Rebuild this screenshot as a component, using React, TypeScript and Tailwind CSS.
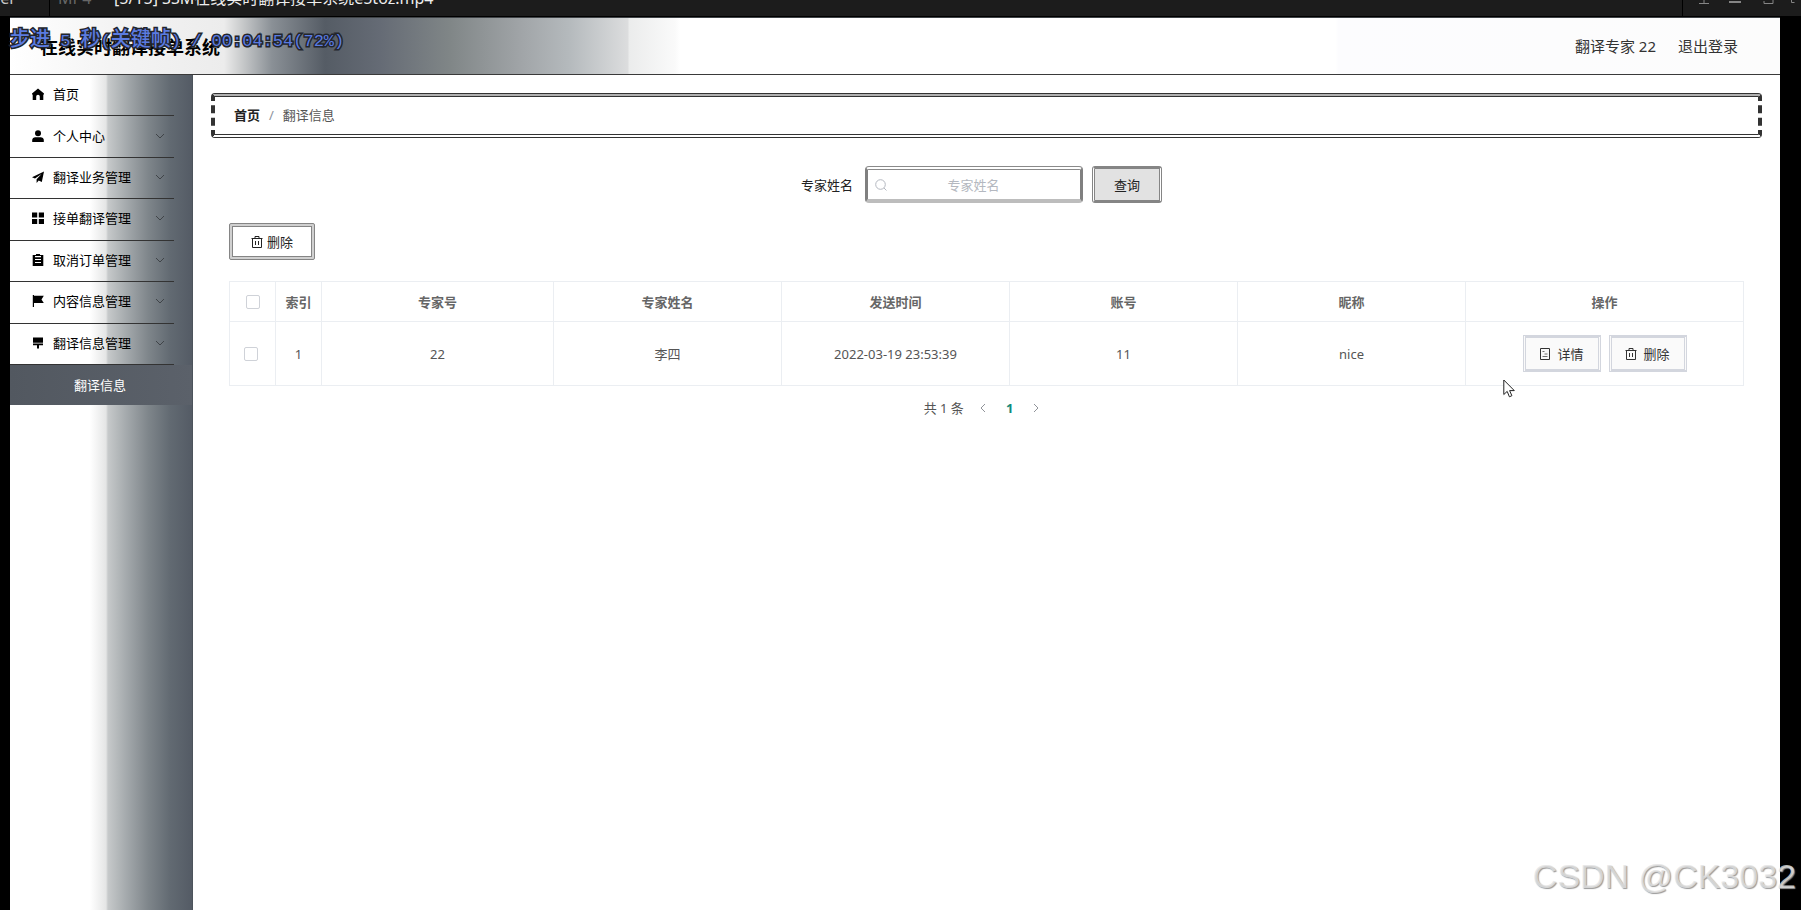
import { useState } from "react";

const menus = [
  { icon: "home", label: "首页", hasChildren: false },
  { icon: "user", label: "个人中心", hasChildren: true },
  { icon: "promotion", label: "翻译业务管理", hasChildren: true },
  { icon: "grid", label: "接单翻译管理", hasChildren: true },
  { icon: "order", label: "取消订单管理", hasChildren: true },
  { icon: "flag", label: "内容信息管理", hasChildren: true },
  { icon: "platform", label: "翻译信息管理", hasChildren: true },
];

const columns = ["专家号", "专家姓名", "发送时间", "账号", "昵称"];

const rows = [
  {
    id: 1,
    cells: ["22", "李四", "2022-03-19 23:53:39", "11", "nice"],
  },
];

const MenuIcon = ({ name }: { name: string }) => (
  <svg viewBox="0 0 12 12" className="size-3 shrink-0" fill="currentColor">
    {name === "home" && (
      <path d="M6 .4 0 5.400v1.200h.7V12h3.500V8.500a1.800 1.800 0 0 1 3.600 0V12h3.500V6.600h.7V5.400z" />
    )}
    {name === "user" && (
      <>
        <circle cx="6" cy="3.200" r="3" />
        <path d="M.2 12V9.800Q.4 7.400 3 7.200h6q2.600.2 2.800 2.600V12z" />
      </>
    )}
    {name === "promotion" && (
      <path d="M12 .5 0 6.200l3 1.300L9.500 3 4.600 8.300V12l2.100-2.500 3.100 1.600z" />
    )}
    {name === "grid" && (
      <path d="M0 .5h5.200v5H0zM6.800.5H12v5H6.800zM0 7h5.200v5H0zM6.800 7H12v5H6.800z" />
    )}
    {name === "order" && (
      <path
        fillRule="evenodd"
        d="M4 0h4v1h3.300v11H.7V1H4zM3 2v1.200h6V2zM3 5v1h6V5zm0 3v1h6V8z"
      />
    )}
    {name === "flag" && <path d="M.8 0H2v.8h9.800L9.500 4.400 11.800 8H2v4H.8z" />}
    {name === "platform" && (
      <path d="M1 .5h10v5.300H1zM1 6.600h10v1.600H7V11l-1 1-1-1V8.200H1z" />
    )}
  </svg>
);

const TrashIcon = () => (
  <svg
    viewBox="0 0 12 12"
    className="size-3"
    fill="none"
    stroke="currentColor"
    strokeWidth="1"
  >
    <path d="M.5 2.500h11M4 2.500v-2h4v2M1.500 2.500v9h9v-9M4.500 5v4M7.500 5v4" />
  </svg>
);

const DetailIcon = () => (
  <svg
    viewBox="0 0 12 12"
    className="size-3"
    fill="none"
    stroke="currentColor"
    strokeWidth="1"
  >
    <path d="M1.500.5h9v11h-9z" />
    <path d="M3.500 3.500h2M5.500 6h3M3.500 8.500h5" opacity=".7" />
  </svg>
);

const Chevron = ({ d }: { d: string }) => (
  <svg
    viewBox="0 0 10 10"
    className="size-[10px] shrink-0"
    fill="none"
    stroke="currentColor"
    strokeWidth="1"
  >
    <path d={d} />
  </svg>
);

const App = () => {
  const [keyword, setKeyword] = useState("");
  const [checked, setChecked] = useState<number[]>([]);

  const toggleRow = (id: number) => {
    setChecked((prev) =>
      prev.includes(id) ? prev.filter((c) => c !== id) : [...prev, id],
    );
  };

  const checkboxClass =
    "block size-[14px] appearance-none rounded-[2px] border border-[#cfd2d8] bg-white checked:bg-[#00897b]";

  return (
    <div className="relative flex min-h-screen flex-col overflow-hidden bg-black font-['Noto_Sans','Noto_Sans_CJK_SC',sans-serif] text-[13px] leading-5 text-[#222]">
      {/* Player title bar */}
      <div className="flex h-4 items-end overflow-hidden bg-[#1c1c1c] text-base leading-6">
        <div className="flex h-4 w-[50px] items-end border-r border-black text-[#c8c8c8]">
          <span className="mb-[6px] -ml-1">ler</span>
        </div>
        <span className="mb-[6px] ml-2 w-14 text-[#666]">MP4</span>
        <span className="mb-[6px] flex-1 whitespace-nowrap text-[#eee]">
          [5/15] SSM在线实时翻译接单系统e5toz.mp4
        </span>
        <div className="h-4 w-[119px] border-l border-black text-[#858585]">
          <svg
            viewBox="0 0 118 16"
            className="h-4 w-[118px]"
            fill="none"
            stroke="currentColor"
          >
            <path d="M16 3.500h10M21 0v3" />
            <path d="M46 2h12" strokeWidth="2" />
            <path d="M81 3.500h9V0M81 1v2.500M108.500 0v2.500h3" />
          </svg>
        </div>
      </div>

      <div className="mt-px mr-[21px] ml-[10px] flex flex-1 flex-col border-t border-[#3f4347] bg-white">
        {/* Header */}
        <header className="flex h-[57px] items-center justify-between border-b border-[#3a3a3a] bg-[linear-gradient(90deg,#fff_0,#f4f4f4_100px,#ececec_214px,#c8cacb_232px,#8a9096_262px,#555c65_315px,#656b75_370px,#808687_440px,#a0a4a7_510px,#b5babd_560px,#dcddde_618px,#ebecec_619px,#fafafa_665px,#fff_670px,#fff_1326px,#fcfcfe_1328px,#fcfcfc_100%)] pr-[42px] pl-[30px]">
          <h1 className="pt-[2px] text-[18px] font-bold text-black">
            在线实时翻译接单系统
          </h1>
          <div className="flex gap-[22px] text-[15px] text-[#333]">
            <span>翻译专家 22</span>
            <a href="#logout">退出登录</a>
          </div>
        </header>

        <div className="flex flex-1">
          {/* Sidebar */}
          <aside className="w-[183px] shrink-0 border-r border-[#4c535b] bg-[linear-gradient(90deg,#fff_80px,#e4e5e5_96px,#c6c9ca_98px,#a5aaad_116px,#7f868b_138px,#626a72_160px,#545b65_182px)] text-black">
            <nav className="grid h-[290px] grid-rows-7">
              {menus.map((menu) => (
                <a
                  key={menu.label}
                  href="#menu"
                  className="mr-[18px] flex items-center border-b border-[#333] pr-[9px] pb-[2px] pl-[22px]"
                >
                  <MenuIcon name={menu.icon} />
                  <span className="ml-[9px] flex-1">{menu.label}</span>
                  {menu.hasChildren && (
                    <span className="text-[#404448]">
                      <Chevron d="M1 3l4 4 4-4" />
                    </span>
                  )}
                </a>
              ))}
            </nav>
            <a
              href="#info"
              className="block bg-[linear-gradient(90deg,#525860,#5b616a)] py-[10px] pr-[2px] text-center text-white"
            >
              翻译信息
            </a>
          </aside>

          {/* Content */}
          <main className="min-w-0 flex-1 px-[18px] pt-[18px]">
            <nav className="flex h-[45px] items-center gap-[9px] rounded-[4px] border-4 border-[#333] bg-[linear-gradient(#b0b0b0_0,#b0b0b0_4px,#fff_4px)] bg-origin-border px-[19px] pb-[2px] [border-style:double_dashed]">
              <a href="#home" className="font-bold text-[#222]">
                首页
              </a>
              <span className="text-[#8c929c]">/</span>
              <span className="text-[#555]">翻译信息</span>
            </nav>

            <div className="px-[18px] pt-7">
              <form
                className="flex items-center justify-center pr-[10px]"
                onSubmit={(e) => e.preventDefault()}
              >
                <label htmlFor="expert">专家姓名</label>
                <div className="ml-3 flex h-[37px] w-[218px] items-center rounded-[4px] border-4 border-x-[3px] border-t-[#8a8a8a] border-r-[#808080] border-b-[#bdbdbd] border-l-[#808080] pl-[7px] text-[#b4b8c0] [border-style:double_solid_solid]">
                  <svg
                    viewBox="0 0 12 12"
                    className="size-3"
                    fill="none"
                    stroke="currentColor"
                  >
                    <circle cx="5.500" cy="5.500" r="4.800" />
                    <path d="M9 9l2.500 2.500" />
                  </svg>
                  <input
                    id="expert"
                    type="text"
                    className="min-w-0 flex-1 pr-5 text-center text-[#333] outline-none placeholder:text-[#b4b8c0]"
                    placeholder="专家姓名"
                    value={keyword}
                    onChange={(e) => setKeyword(e.target.value)}
                  />
                </div>
                <button
                  type="submit"
                  className="ml-[9px] h-[37px] w-[70px] rounded-[3px] border-[3px] border-[#858585] bg-[#e2e2e2] bg-clip-padding [border-style:solid_double]"
                >
                  查询
                </button>
              </form>

              <button
                type="button"
                className="mt-5 flex h-[37px] w-[86px] items-center justify-center gap-1 rounded-[2px] border-4 border-double border-[#858585] bg-[linear-gradient(#fff,#fff),linear-gradient(#d0d0d0,#d0d0d0)] [background-clip:padding-box,border-box]"
              >
                <TrashIcon />
                删除
              </button>

              <table className="mt-[21px] w-full table-fixed border-collapse text-center text-[#555]">
                <colgroup>
                  <col className="w-[46px]" />
                  <col className="w-[46px]" />
                  <col className="w-[232px]" />
                  <col />
                  <col />
                  <col />
                  <col />
                  <col className="w-[278px]" />
                </colgroup>
                <thead className="text-[#666]">
                  <tr className="h-10">
                    <th className="border border-[#ebeef2]">
                      <input
                        type="checkbox"
                        aria-label="全选"
                        className={`${checkboxClass} mx-auto`}
                        checked={checked.length === rows.length}
                        onChange={(e) =>
                          setChecked(
                            e.target.checked ? rows.map((r) => r.id) : [],
                          )
                        }
                      />
                    </th>
                    <th className="border border-[#ebeef2]">索引</th>
                    {columns.map((col) => (
                      <th key={col} className="border border-[#ebeef2]">
                        {col}
                      </th>
                    ))}
                    <th className="border border-[#ebeef2]">操作</th>
                  </tr>
                </thead>
                <tbody>
                  {rows.map((row, index) => (
                    <tr key={row.id} className="h-16">
                      <td className="border border-[#ebeef2] pl-[14px]">
                        <input
                          type="checkbox"
                          aria-label="选择"
                          className={checkboxClass}
                          checked={checked.includes(row.id)}
                          onChange={() => toggleRow(row.id)}
                        />
                      </td>
                      <td className="border border-[#ebeef2]">{index + 1}</td>
                      {row.cells.map((cell) => (
                        <td key={cell} className="border border-[#ebeef2]">
                          {cell}
                        </td>
                      ))}
                      <td className="border border-[#ebeef2]">
                        <div className="flex justify-center gap-2 text-[#333]">
                          <button
                            type="button"
                            className="flex h-[37px] w-[78px] items-center justify-center gap-[6px] border-[3px] border-[#d3d6de] bg-[#fafafa] [border-style:solid_double]"
                          >
                            <DetailIcon />
                            详情
                          </button>
                          <button
                            type="button"
                            className="flex h-[37px] w-[78px] items-center justify-center gap-[6px] border-[3px] border-[#d3d6de] bg-[#fafafa] [border-style:solid_double]"
                          >
                            <TrashIcon />
                            删除
                          </button>
                        </div>
                      </td>
                    </tr>
                  ))}
                </tbody>
              </table>

              {/* Pagination */}
              <div className="mt-3 flex items-center justify-center pr-2 text-[#555]">
                <span className="mr-[14px]">共 1 条</span>
                <button
                  type="button"
                  aria-label="上一页"
                  className="text-[#909399]"
                >
                  <Chevron d="M7 1L3 5l4 4" />
                </button>
                <button
                  type="button"
                  className="mx-[18px] font-bold text-[#128a7c]"
                >
                  1
                </button>
                <button
                  type="button"
                  aria-label="下一页"
                  className="text-[#909399]"
                >
                  <Chevron d="M3 1l4 4-4 4" />
                </button>
              </div>
            </div>
          </main>
        </div>
      </div>

      {/* Player step message */}
      <div className="absolute top-[26px] left-[10px] font-['Liberation_Mono','Noto_Sans_CJK_SC',monospace] text-[17px] leading-[30px] font-medium whitespace-pre text-[#5b7be0] [-webkit-text-stroke:3px_#22252c] [paint-order:stroke]">
        <span className="text-[20px]">步进</span> 5{" "}
        <span className="text-[20px]">秒</span>(
        <span className="text-[20px]">关键帧</span>) / 00:04:54(72%)
      </div>

      {/* Mouse pointer */}
      <svg
        viewBox="0 0 12 19"
        className="absolute top-[379px] left-[1503px] h-[19px] w-3"
        fill="#fff"
        stroke="#222"
      >
        <path d="M.8 1v14.500l3.400-3.100 2.200 5.400 2.500-1.100-2.300-5.100h4.700z" />
      </svg>

      <div className="absolute right-[5px] bottom-[14px] font-['Liberation_Sans',sans-serif] text-[34px] leading-10 whitespace-nowrap text-[#e4e4e4]/80 [text-shadow:1px_1px_1px_#999]">
        CSDN @CK3032
      </div>
    </div>
  );
};

export default App;
